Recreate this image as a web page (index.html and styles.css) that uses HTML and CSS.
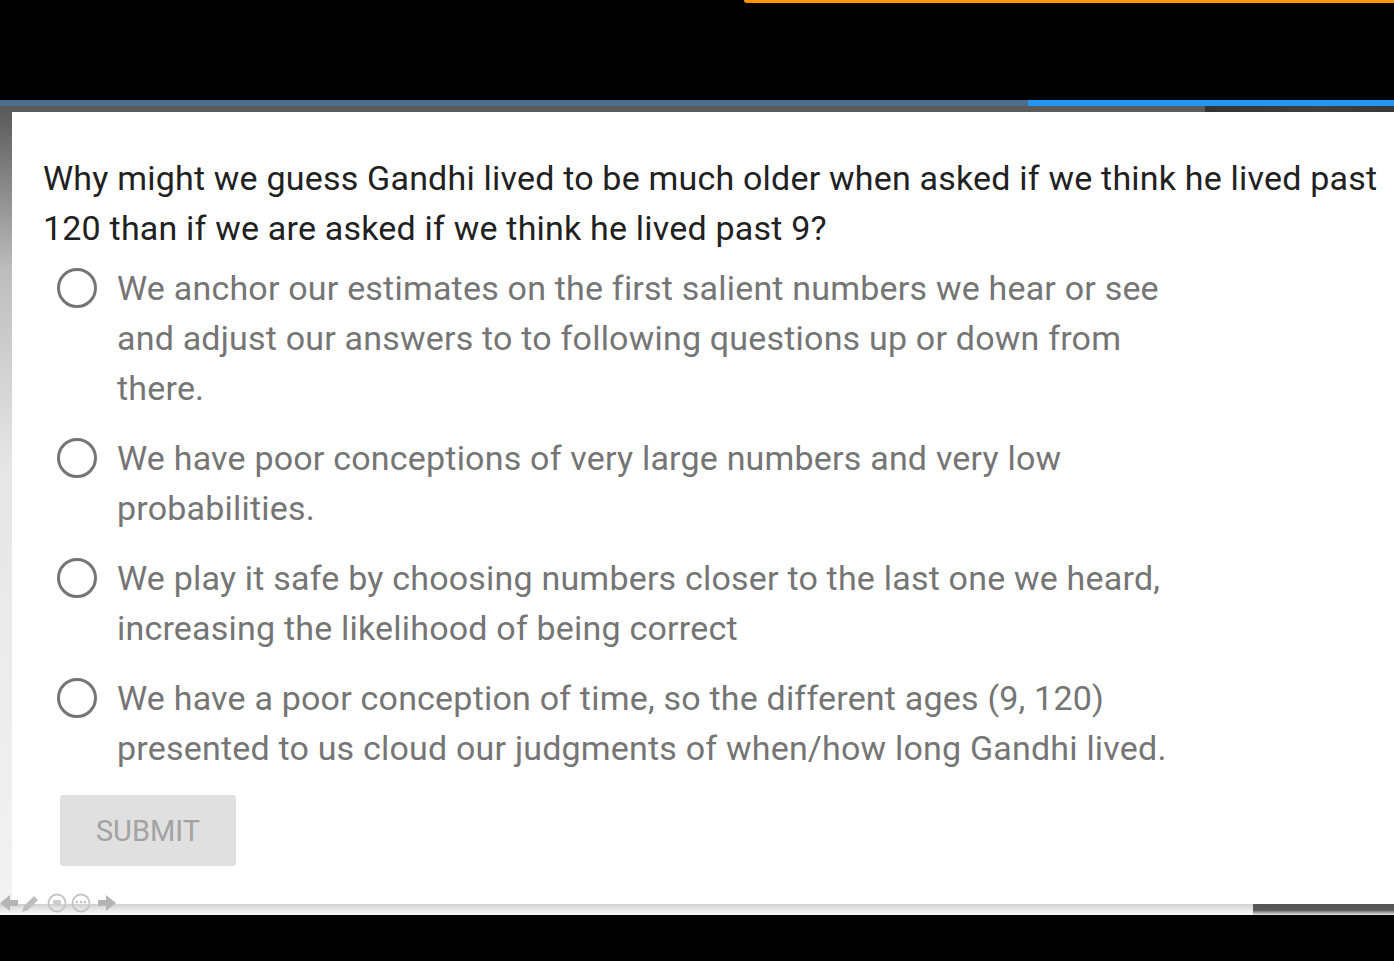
FILE: index.html
```html
<!DOCTYPE html>
<html lang="en">
<head>
<meta charset="utf-8">
<title>Quiz</title>
<link rel="stylesheet" href="styles.css">
</head>
<body>
<div class="screen">
  <div class="top">
    <div class="orange"></div>
  </div>
  <div class="progress">
    <div class="progress-done"></div>
    <div class="progress-current"></div>
  </div>
  <div class="frame-top">
    <div class="frame-top-left"></div>
    <div class="frame-top-right"></div>
  </div>
  <div class="stage">
    <div class="left-edge"></div>
    <div class="panel">
      <p class="question">Why might we guess Gandhi lived to be much older when asked if we think he lived past 120 than if we are asked if we think he lived past 9?</p>
      <ul class="options">
        <li class="option"><span class="radio"></span><span class="label">We anchor our estimates on the first salient numbers we hear or see and adjust our answers to to following questions up or down from there.</span></li>
        <li class="option"><span class="radio"></span><span class="label">We have poor conceptions of very large numbers and very low probabilities.</span></li>
        <li class="option"><span class="radio"></span><span class="label">We play it safe by choosing numbers closer to the last one we heard, increasing the likelihood of being correct</span></li>
        <li class="option"><span class="radio"></span><span class="label">We have a poor conception of time, so the different ages (9, 120) presented to us cloud our judgments of when/how long Gandhi lived.</span></li>
      </ul>
      <button class="submit" type="button">SUBMIT</button>
    </div>
  </div>
  <div class="frame-bottom">
    <div class="frame-bottom-left"></div>
    <div class="frame-bottom-right"></div>
  </div>
  <div class="tools">
    <svg width="120" height="22" viewBox="0 0 120 22">
      <path d="M0 11 L10 3 L10 8 L18 8 L18 14 L10 14 L10 19 Z" fill="#b5b5b5"/>
      <path d="M22 20 L24 14 L34 4 L38 8 L28 18 Z" fill="#bdbdbd"/>
      <circle cx="57" cy="11" r="8.5" fill="none" stroke="#c4c4c4" stroke-width="1.8"/>
      <rect x="53" y="8" width="8" height="6" rx="1" fill="#cdcdcd"/>
      <circle cx="81" cy="11" r="8.5" fill="none" stroke="#c4c4c4" stroke-width="1.8"/>
      <circle cx="77" cy="10" r="1.2" fill="#c4c4c4"/>
      <circle cx="81" cy="10" r="1.2" fill="#c4c4c4"/>
      <circle cx="85" cy="10" r="1.2" fill="#c4c4c4"/>
      <path d="M116 11 L106 3 L106 8 L98 8 L98 14 L106 14 L106 19 Z" fill="#b5b5b5"/>
    </svg>
  </div>
</div>
</body>
</html>
```
FILE: styles.css
```css
html, body {
  margin: 0;
  padding: 0;
  background: #000;
}
.screen {
  position: relative;
  width: 1394px;
  height: 961px;
  overflow: hidden;
  background: #000;
  font-family: Roboto, "Noto Sans", sans-serif;
}
.top {
  height: 100px;
}
.orange {
  margin-left: 744px;
  height: 3px;
  background: #ff9800;
  border-bottom-left-radius: 3px;
}
.progress {
  display: flex;
  height: 6px;
}
.progress-done {
  width: 1028px;
  background: #4b6e8d;
}
.progress-current {
  flex: 1;
  background: #2196f3;
}
.frame-top {
  display: flex;
  height: 6px;
}
.frame-top-left {
  width: 1205px;
  background: #5b5b5b;
}
.frame-top-right {
  flex: 1;
  background: linear-gradient(90deg, #333 0%, #3f3f3f 60%, #383838 100%);
}
.stage {
  display: flex;
  height: 792px;
}
.left-edge {
  flex: none;
  width: 12px;
  background: linear-gradient(180deg, #5b5b5b 0%, #bdbdbd 20%, #e6e6e6 45%, #f2f2f2 100%);
}
.panel {
  flex: 1;
  min-width: 0;
  overflow: hidden;
  background: #fff;
  padding: 41px 0 0 31px;
  box-sizing: border-box;
}
.question {
  margin: 0;
  width: 1348px;
  font-size: 34px;
  letter-spacing: 0.2px;
  line-height: 50px;
  color: #212121;
}
.options {
  list-style: none;
  margin: 10px 0 0 0;
  padding: 0;
  width: 1150px;
}
.option {
  display: flex;
  align-items: flex-start;
  margin-bottom: 20px;
}
.radio {
  flex: none;
  width: 34px;
  height: 34px;
  border: 3px solid #757575;
  border-radius: 50%;
  margin: 5px 0 0 14px;
}
.label {
  margin-left: 20px;
  font-size: 34px;
  letter-spacing: 0.2px;
  line-height: 50px;
  color: #757575;
}
.submit {
  display: block;
  margin: 22px 0 0 17px;
  width: 176px;
  height: 71px;
  border: none;
  border-radius: 3px;
  background: #e0e0e0;
  color: #a3a3a3;
  font-family: Roboto, "Noto Sans", sans-serif;
  font-size: 29px;
  padding: 0;
}
.frame-bottom {
  display: flex;
  height: 11px;
}
.frame-bottom-left {
  width: 1253px;
  background: linear-gradient(180deg, #cfcfcf 0%, #e8e8e8 50%, #fafafa 100%);
}
.frame-bottom-right {
  flex: 1;
  background: linear-gradient(180deg, #555 0%, #5a5a5a 55%, #e8e8e8 100%);
}
.tools {
  position: absolute;
  left: 0;
  top: 892px;
  width: 120px;
  height: 22px;
}
```
